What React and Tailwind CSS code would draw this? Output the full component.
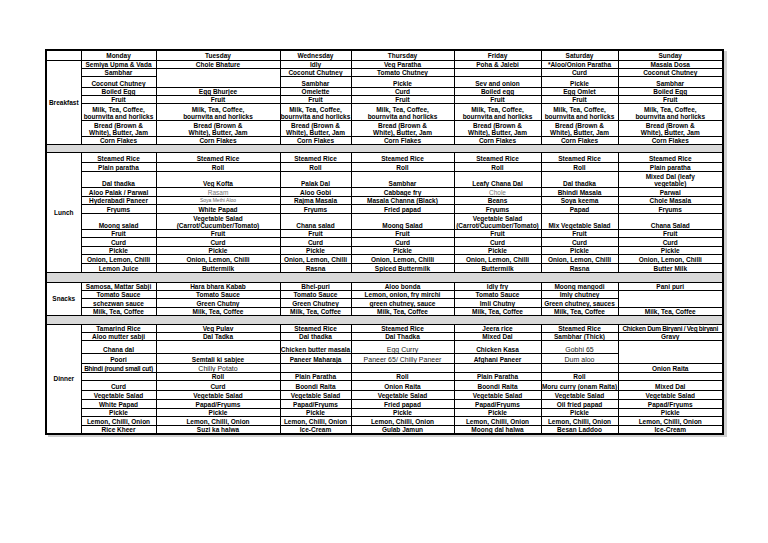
import React from 'react'

const days = ['Monday', 'Tuesday', 'Wednesday', 'Thursday', 'Friday', 'Saturday', 'Sunday']
const SKIP = 'skip'
const all = (t) => Array(7).fill(t)

const milk = <>Milk, Tea, Coffee,<br />bournvita and horlicks</>
const bread = <>Bread (Brown &amp;<br />White), Butter, Jam</>
const vegSalad = <>Vegetable Salad<br />(Carrot/Cucumber/Tomato)</>
const light = 'font-normal text-[#777]'
const thin = 'font-normal text-[#222] text-[7px]'

const sections = [
  {
    name: 'Breakfast',
    gap: 'h-[8px]',
    rows: [
      { h: 'h-[8px]', cells: ['Semiya Upma & Vada', 'Chole Bhature', 'Idly', 'Veg Paratha', 'Poha & Jalebi', '*Aloo/Onion Paratha', 'Masala Dosa'] },
      { h: 'h-[8px]', cells: ['Sambhar', { t: '', rs: 2 }, 'Coconut Chutney', 'Tomato Chutney', '', 'Curd', 'Coconut Chutney'] },
      { h: 'h-[11px]', cells: ['Coconut Chutney', SKIP, 'Sambhar', 'Pickle', 'Sev and onion', 'Pickle', 'Sambhar'] },
      { h: 'h-[8px]', cells: ['Boiled Egg', 'Egg Bhurjee', 'Omelette', 'Curd', 'Boiled egg', 'Egg Omlet', 'Boiled Egg'] },
      { h: 'h-[8px]', cells: all('Fruit') },
      { h: 'h-[17px]', cells: all(milk) },
      { h: 'h-[16px]', cells: all(bread) },
      { h: 'h-[8px]', cells: all('Corn Flakes') },
    ],
  },
  {
    name: 'Lunch',
    gap: 'h-[10px]',
    rows: [
      { h: 'h-[10px]', cells: all('Steamed Rice') },
      { h: 'h-[9px]', cells: ['Plain paratha', 'Roll', 'Roll', 'Roll', 'Roll', 'Roll', 'Plain paratha'] },
      { h: 'h-[16px]', cells: ['Dal thadka', 'Veg Kofta', 'Palak Dal', 'Sambhar', 'Leafy Chana Dal', 'Dal thadka', <>Mixed Dal (leafy<br />vegetable)</>] },
      { h: 'h-[9px]', cells: ['Aloo Palak / Parwal', { t: 'Rasam', c: light }, 'Aloo Gobi', 'Cabbage fry', { t: 'Chole', c: light }, 'Bhindi Masala', 'Parwal'] },
      { h: 'h-[8px]', cells: ['Hyderabadi Paneer', { t: 'Soya Methi Aloo', c: 'font-normal text-[#666] text-[5px]' }, 'Rajma Masala', 'Masala Channa (Black)', 'Beans', 'Soya keema', 'Chole Masala'] },
      { h: 'h-[9px]', cells: ['Fryums', 'White Papad', 'Fryums', 'Fried papad', 'Fryums', 'Papad', 'Fryums'] },
      { h: 'h-[16px]', cells: ['Moong salad', vegSalad, 'Chana salad', 'Moong Salad', vegSalad, 'Mix Vegetable Salad', 'Chana Salad'] },
      { h: 'h-[8px]', cells: all('Fruit') },
      { h: 'h-[9px]', cells: all('Curd') },
      { h: 'h-[8px]', cells: all('Pickle') },
      { h: 'h-[9px]', cells: all('Onion, Lemon, Chilli') },
      { h: 'h-[9px]', cells: ['Lemon Juice', 'Buttermilk', 'Rasna', 'Spiced Buttermilk', 'Buttermilk', 'Rasna', 'Butter Milk'] },
    ],
  },
  {
    name: 'Snacks',
    gap: 'h-[9px]',
    rows: [
      { h: 'h-[8px]', cells: ['Samosa, Mattar Sabji', 'Hara bhara Kabab', 'Bhel-puri', 'Aloo bonda', 'Idly fry', 'Moong mangodi', 'Pani puri'] },
      { h: 'h-[8px]', cells: ['Tomato Sauce', 'Tomato Sauce', 'Tomato Sauce', 'Lemon, onion, fry mirchi', 'Tomato Sauce', 'Imly chutney', { t: '', rs: 2 }] },
      { h: 'h-[9px]', cells: ['schezwan sauce', 'Green Chutny', 'Green Chutney', 'green chutney, sauce', 'Imli Chutny', 'Green chutney, sauces', SKIP] },
      { h: 'h-[8px]', cells: all('Milk, Tea, Coffee') },
    ],
  },
  {
    name: 'Dinner',
    rows: [
      { h: 'h-[8px]', cells: ['Tamarind Rice', 'Veg Pulav', 'Steamed Rice', 'Steamed Rice', 'Jeera rice', 'Steamed Rice', { t: 'Chicken Dum Biryani / Veg biryani', c: 'tracking-[-0.3px]' }] },
      { h: 'h-[8px]', cells: ['Aloo mutter sabji', 'Dal Tadka', 'Dal thadka', 'Dal Thadka', 'Mixed Dal', 'Sambhar (Thick)', 'Gravy'] },
      { h: 'h-[13px]', cells: ['Chana dal', '', 'Chicken butter masala', { t: 'Egg Curry', c: thin }, 'Chicken Kasa', { t: 'Gobhi 65', c: thin }, { t: '', rs: 2 }] },
      { h: 'h-[10px]', cells: ['Poori', 'Semtali ki sabjee', 'Paneer Maharaja', { t: 'Paneer 65/ Chilly Paneer', c: thin }, 'Afghani Paneer', { t: 'Dum aloo', c: thin }, SKIP] },
      { h: 'h-[9px]', cells: [{ t: 'Bhindi (round small cut)', c: 'tracking-[-0.25px]' }, { t: 'Chilly Potato', c: thin }, '', '', '', '', 'Onion Raita'] },
      { h: 'h-[8px]', cells: ['', 'Roll', 'Plain Paratha', 'Roll', 'Plain Paratha', 'Roll', ''] },
      { h: 'h-[10px]', cells: ['Curd', 'Curd', 'Boondi Raita', 'Onion Raita', 'Boondi Raita', 'Moru curry (onam Raita)', 'Mixed Dal'] },
      { h: 'h-[9px]', cells: all('Vegetable Salad') },
      { h: 'h-[9px]', cells: ['White Papad', 'Papad/Fryums', 'Papad/Fryums', 'Fried papad', 'Papad/Fryums', 'Oil fried papad', 'Papad/Fryums'] },
      { h: 'h-[8px]', cells: all('Pickle') },
      { h: 'h-[9px]', cells: all('Lemon, Chilli, Onion') },
      { h: 'h-[9px]', cells: ['Rice Kheer', 'Suzi ka halwa', 'Ice-Cream', 'Gulab Jamun', 'Moong dal halwa', 'Besan Laddoo', 'Ice-Cream'] },
    ],
  },
]

const cellBase = 'border border-black p-0 text-center align-bottom whitespace-nowrap overflow-hidden'

function Section({ section }) {
  return (
    <>
      {section.rows.map((row, i) => (
        <tr key={i} className={row.h}>
          {i === 0 && (
            <td rowSpan={section.rows.length} className="border border-black p-0 text-center align-middle">
              {section.name}
            </td>
          )}
          {row.cells.map((cell, j) => {
            if (cell === SKIP) return null
            if (cell && typeof cell === 'object' && 't' in cell) {
              return (
                <td key={j} rowSpan={cell.rs || 1} className={cellBase + ' ' + (cell.c || '')}>
                  {cell.t}
                </td>
              )
            }
            return <td key={j} className={cellBase}>{cell}</td>
          })}
        </tr>
      ))}
      {section.gap && (
        <tr className={section.gap}>
          <td colSpan={8} className="border border-black bg-[#d9d9d9] p-0" />
        </tr>
      )}
    </>
  )
}

export default function App() {
  return (
    <div className="min-h-[543px] w-[768px] bg-white pl-[45px] pt-[49px] font-['Liberation_Sans',Arial,sans-serif] text-black">
      <table className="w-[677px] table-fixed border-collapse border-2 border-black text-[6.5px] font-bold leading-[7px] shadow-[3px_2px_0_#cfcfcf]">
        <colgroup>
          <col className="w-[35px]" />
          <col className="w-[75px]" />
          <col className="w-[124px]" />
          <col className="w-[71px]" />
          <col className="w-[103px]" />
          <col className="w-[87px]" />
          <col className="w-[77px]" />
          <col className="w-[105px]" />
        </colgroup>
        <tbody>
          <tr className="h-[10px]">
            <td className="border border-black p-0" />
            {days.map((d) => (
              <td key={d} className="border border-black p-0 text-center align-middle">{d}</td>
            ))}
          </tr>
          {sections.map((s) => (
            <Section key={s.name} section={s} />
          ))}
        </tbody>
      </table>
    </div>
  )
}
